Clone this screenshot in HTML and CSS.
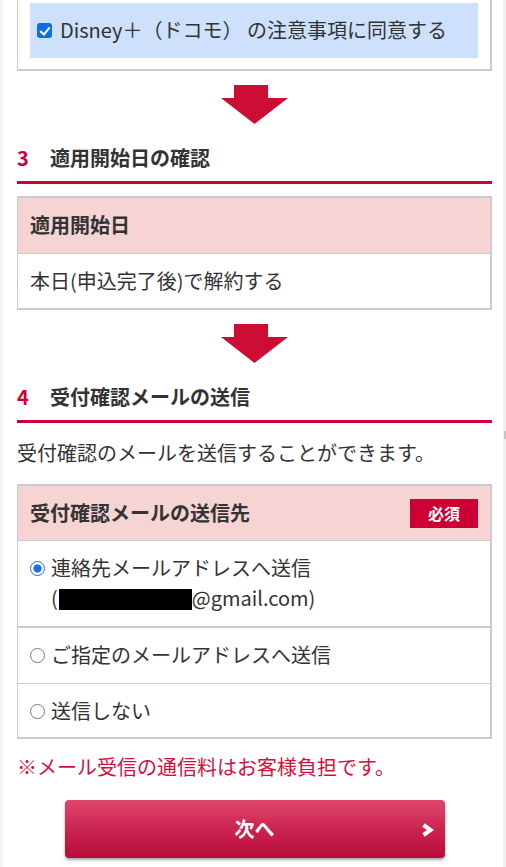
FILE: index.html
```html
<!DOCTYPE html>
<html lang="ja">
<head>
<meta charset="utf-8">
<title>受付確認</title>
<link rel="stylesheet" href="styles.css">
</head>
<body>
<div class="page">
  <div class="agree-box">
    <label class="agree">
      <input type="checkbox" class="check" checked>
      <span>Disney＋（ドコモ） の注意事項に同意する</span>
    </label>
  </div>

  <div class="arrow">
    <svg width="67" height="39" viewBox="0 0 67 39"><polygon points="13,0 47,0 47,13 67,13 33.5,39 0,13 13,13" fill="#cc0e34"/></svg>
  </div>

  <h2 class="step"><span class="num">3</span>適用開始日の確認</h2>
  <div class="table">
    <div class="th">適用開始日</div>
    <div class="td">本日(申込完了後)で解約する</div>
  </div>

  <div class="arrow">
    <svg width="67" height="39" viewBox="0 0 67 39"><polygon points="13,0 47,0 47,13 67,13 33.5,39 0,13 13,13" fill="#cc0e34"/></svg>
  </div>

  <h2 class="step"><span class="num">4</span>受付確認メールの送信</h2>
  <p class="desc">受付確認のメールを送信することができます。</p>

  <div class="table table-mail">
    <div class="th th-flex">
      <span>受付確認メールの送信先</span>
      <span class="badge">必須</span>
    </div>
    <label class="opt opt-first">
      <span class="radio on"></span>
      <span>連絡先メールアドレスへ送信<br>(<span class="redact"></span>@gmail.com)</span>
    </label>
    <label class="opt">
      <span class="radio"></span>
      <span>ご指定のメールアドレスへ送信</span>
    </label>
    <label class="opt opt-last">
      <span class="radio"></span>
      <span>送信しない</span>
    </label>
  </div>

  <p class="note">※メール受信の通信料はお客様負担です。</p>

  <button class="next" type="button">次へ
    <svg class="chev" width="15" height="14" viewBox="0 0 15 14"><polyline points="3.5,2 10.5,7 3.5,12" fill="none" stroke="#fff" stroke-width="4" stroke-linejoin="miter"/></svg>
  </button>
  <div class="scroll-thumb"></div>
</div>
</body>
</html>
```

FILE: styles.css
```css
* { box-sizing: border-box; }
html, body { margin: 0; padding: 0; background: #fff; }
body {
  font-family: "Noto Sans CJK JP", "Noto Sans", sans-serif;
  font-size: 20px;
  line-height: 30px;
  color: #333;
}
.page {
  position: relative;
  width: 506px;
  min-height: 867px;
  border-left: 3px solid #f3f3f3;
  border-right: 3px solid #f0f0f0;
  padding: 0 11px 0 14px;
}
.agree-box {
  border: 2px solid #cccccc;
  border-top: none;
  border-left-width: 1px;
  padding: 3px 12px 11px 12px;
}
.agree {
  display: flex;
  align-items: center;
  background: #cde0fc;
  padding: 12px 7px 13px 7px;
  gap: 8px;
  color: #333;
}
.check {
  appearance: none;
  -webkit-appearance: none;
  position: relative;
  width: 15px;
  height: 15px;
  margin: 0;
  flex: none;
  border-radius: 3px;
  background: #0b6fe0;
}
.check::after {
  content: "";
  position: absolute;
  left: 5px;
  top: 2px;
  width: 4px;
  height: 8px;
  border: solid #fff;
  border-width: 0 2.5px 2.5px 0;
  transform: rotate(40deg);
}
.arrow {
  display: flex;
  justify-content: center;
  margin-top: 14px;
  height: 39px;
}
.arrow svg { display: block; }
.step {
  margin: 19px 0 0 0;
  font-size: 20px;
  line-height: 30px;
  font-weight: bold;
  color: #333;
  padding-bottom: 8px;
  border-bottom: 3px solid #cc0033;
  display: flex;
}
.num {
  color: #cc0033;
  width: 33px;
  flex: none;
}
.table {
  margin-top: 12px;
  border: 2px solid #cccccc;
  border-left-width: 1px;
}
.th {
  background: #f6d4d4;
  font-weight: bold;
  padding: 12px 12px 13px 12px;
  border-bottom: 1px solid #cccccc;
}
.td {
  padding: 12px 12px;
}
.desc {
  margin: 15px 0 0 0;
}
.table-mail { margin-top: 16px; }
.th-flex {
  display: flex;
  justify-content: space-between;
  align-items: center;
  padding: 12px 12px 12px 12px;
}
.badge {
  width: 68px;
  height: 29px;
  background: #cc0033;
  color: #fff;
  font-size: 16px;
  line-height: 29px;
  text-align: center;
  font-weight: bold;
}
.opt {
  display: flex;
  align-items: flex-start;
  padding: 12px 12px 13px 12px;
  border-bottom: 1px solid #cccccc;
}
.opt-first { border-bottom-width: 2px; }
.opt-last { border-bottom: none; padding-bottom: 11px; }
.radio {
  display: block;
  width: 15px;
  height: 15px;
  min-width: 15px;
  margin: 8px 6px 0 0;
  flex: none;
  border-radius: 50%;
  border: 1.5px solid #7a7a7a;
  background: #fff;
}
.radio.on {
  border: 1.5px solid #1a6fe6;
  background: radial-gradient(circle, #1a6fe6 0, #1a6fe6 3.8px, #fff 4.4px);
}
.redact {
  display: inline-block;
  width: 133px;
  height: 21px;
  background: #000;
  vertical-align: -4px;
  margin-left: 1px;
}
.note {
  margin: 13px 0 0 0;
  color: #d4103c;
}
.next {
  position: relative;
  display: block;
  width: 380px;
  height: 58px;
  margin: 18px auto 0 auto;
  border: none;
  border-radius: 4px;
  background: linear-gradient(to bottom, #de466b 0%, #cb2450 50%, #b80b39 100%);
  box-shadow: 0 2px 3px rgba(0,0,0,0.35);
  color: #fff;
  font-family: "Noto Sans CJK JP", "Noto Sans", sans-serif;
  font-size: 20px;
  font-weight: bold;
  line-height: 58px;
  padding: 0;
  text-align: center;
}
.chev {
  position: absolute;
  right: 10px;
  top: 23px;
}
.scroll-thumb {
  position: absolute;
  right: -3px;
  top: 431px;
  width: 2px;
  height: 8px;
  background: #c4c4c4;
}
```
